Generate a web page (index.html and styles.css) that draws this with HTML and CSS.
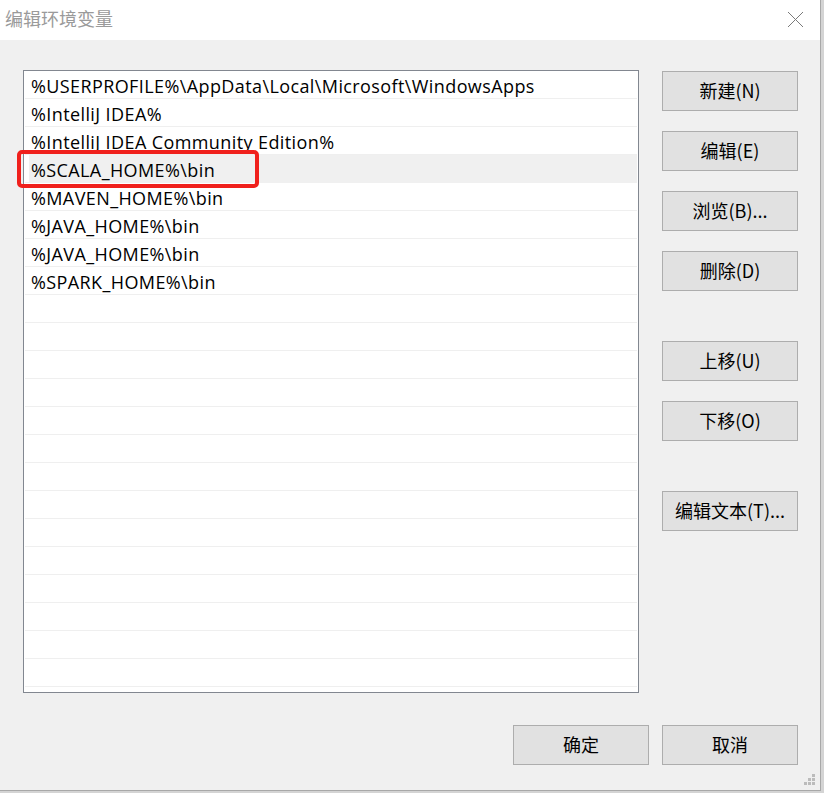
FILE: index.html
```html
<!DOCTYPE html>
<html lang="zh-CN">
<head>
<meta charset="utf-8">
<title>编辑环境变量</title>
<link rel="stylesheet" href="styles.css">
</head>
<body>
<div class="window">
  <div class="titlebar">
    <span class="title">编辑环境变量</span>
    <svg class="close" width="17" height="17" viewBox="0 0 17 17"><path d="M1 1 L16 16 M16 1 L1 16" stroke="#7a7a7a" stroke-width="1" fill="none"/></svg>
  </div>
  <div class="content">
    <div class="main">
      <div class="list">
        <div class="row">%USERPROFILE%\AppData\Local\Microsoft\WindowsApps</div>
        <div class="row">%IntelliJ IDEA%</div>
        <div class="row">%IntelliJ IDEA Community Edition%</div>
        <div class="row selected">%SCALA_HOME%\bin</div>
        <div class="row">%MAVEN_HOME%\bin</div>
        <div class="row">%JAVA_HOME%\bin</div>
        <div class="row">%JAVA_HOME%\bin</div>
        <div class="row">%SPARK_HOME%\bin</div>
        <div class="row"></div>
        <div class="row"></div>
        <div class="row"></div>
        <div class="row"></div>
        <div class="row"></div>
        <div class="row"></div>
        <div class="row"></div>
        <div class="row"></div>
        <div class="row"></div>
        <div class="row"></div>
        <div class="row"></div>
        <div class="row"></div>
        <div class="row"></div>
        <div class="row"></div>
        <div class="row"></div>
      </div>
      <div class="buttons">
        <div class="btn">新建(N)</div>
        <div class="btn">编辑(E)</div>
        <div class="btn">浏览(B)...</div>
        <div class="btn">删除(D)</div>
        <div class="btn group">上移(U)</div>
        <div class="btn">下移(O)</div>
        <div class="btn group">编辑文本(T)...</div>
      </div>
    </div>
    <div class="footer">
      <div class="btn">确定</div>
      <div class="btn">取消</div>
    </div>
    <div class="grip">
      <span class="dot d1"></span>
      <span class="dot d2"></span><span class="dot d3"></span>
      <span class="dot d4"></span><span class="dot d5"></span><span class="dot d6"></span>
    </div>
  </div>
  <div class="highlight"></div>
</div>
</body>
</html>
```
FILE: styles.css
```css
* { box-sizing: border-box; }
html, body {
  margin: 0;
  padding: 0;
  background: #d4d4d4;
  width: 824px;
  height: 793px;
  overflow: hidden;
}
body {
  font-family: "Open Sans", "Noto Sans CJK SC", sans-serif;
}
.window {
  position: relative;
  width: 821px;
  height: 791px;
  border-right: 1px solid #a8a8a8;
  border-bottom: 1px solid #a8a8a8;
  background: #f0f0f0;
}
.titlebar {
  height: 40px;
  background: #ffffff;
  display: flex;
  align-items: center;
  justify-content: space-between;
  padding: 0 16px 4px 5px;
}
.title {
  font-family: "Noto Sans CJK SC", sans-serif;
  font-size: 18px;
  color: #9a9a9a;
}
.close {
  display: block;
  margin-top: 2px;
}
.content {
  position: relative;
  height: 750px;
  padding: 30px 22px 0 23px;
}
.main {
  display: flex;
  gap: 23px;
}
.list {
  width: 616px;
  height: 623px;
  border: 1px solid #828790;
  background: #ffffff;
  overflow: hidden;
}
.row {
  height: 28px;
  margin: 0 1px;
  border-bottom: 1px solid #efefef;
  padding: 2px 0 0 6px;
  font-size: 18px;
  letter-spacing: 0.4px;
  line-height: 27px;
  color: #000;
  white-space: nowrap;
}
.row.selected {
  background: linear-gradient(to right, #ffffff 4px, #f0f0f0 4px);
  border-bottom-color: #f0f0f0;
}
.buttons {
  display: flex;
  flex-direction: column;
  gap: 20px;
  padding-top: 1px;
}
.btn {
  width: 136px;
  height: 40px;
  background: #e1e1e1;
  border: 1px solid #adadad;
  display: flex;
  align-items: center;
  justify-content: center;
  font-family: "Noto Sans CJK SC", sans-serif;
  font-size: 18px;
  color: #000;
  padding-bottom: 2px;
}
.btn.group {
  margin-top: 30px;
}
.footer {
  display: flex;
  justify-content: flex-end;
  gap: 13px;
  margin-top: 32px;
}
.grip {
  position: absolute;
  right: 0;
  bottom: 0;
  width: 16px;
  height: 16px;
}
.dot {
  position: absolute;
  width: 3px;
  height: 3px;
  background: #bcbcbc;
}
.d1 { left: 8px; top: 0; }
.d2 { left: 4px; top: 4px; }
.d3 { left: 8px; top: 4px; }
.d4 { left: 0; top: 8px; }
.d5 { left: 4px; top: 8px; }
.d6 { left: 8px; top: 8px; }
.highlight {
  position: absolute;
  left: 17px;
  top: 150px;
  width: 242px;
  height: 38px;
  border: 4px solid #f0201c;
  border-radius: 5px;
}
```
